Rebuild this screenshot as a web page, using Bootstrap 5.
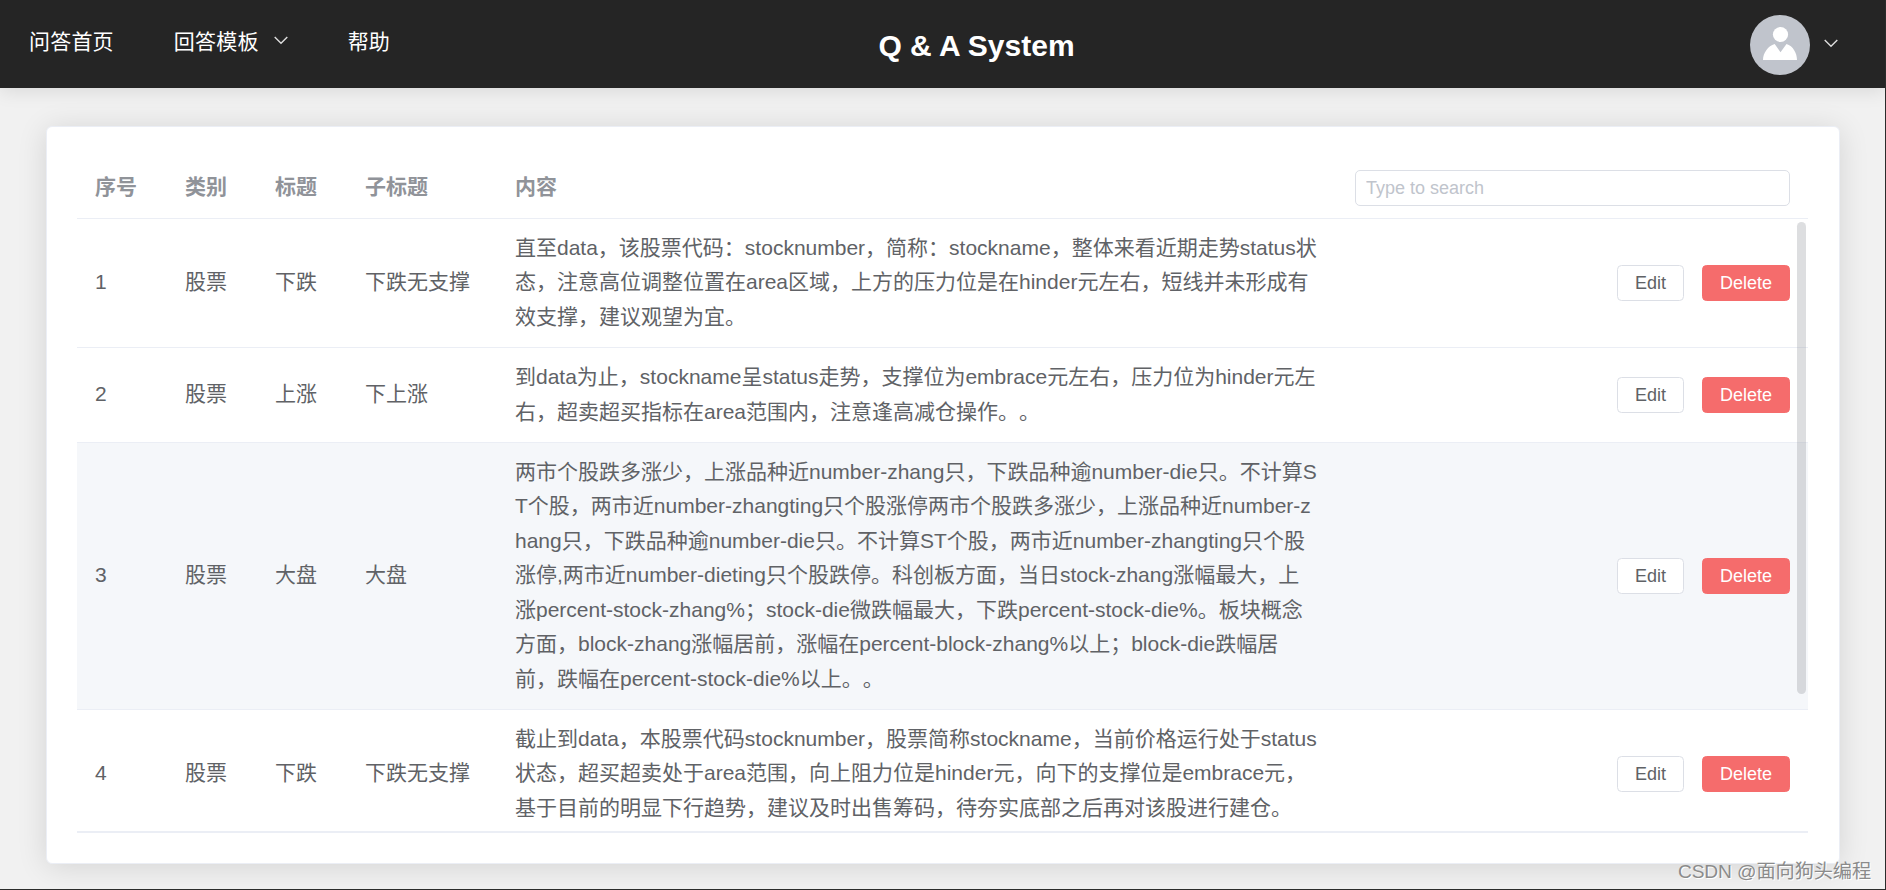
<!DOCTYPE html>
<html lang="zh-CN">
<head>
<meta charset="utf-8">
<meta name="viewport" content="width=device-width, initial-scale=1">
<title>Q &amp; A System</title>
<link href="https://cdn.jsdelivr.net/npm/bootstrap@5.3.0/dist/css/bootstrap.min.css" rel="stylesheet">
<style>
body{height:890px;overflow:hidden;background:#f1f1f1;font-family:"Liberation Sans","Noto Sans CJK SC",sans-serif;font-size:21px;color:#606266;border-right:1px solid #2b2c2b;border-bottom:1px solid #2b2c2b}
.topbar{height:88px;grid-template-columns:1fr auto 1fr;background:#252525;box-shadow:0 3px 18px rgba(0,0,0,.1);color:#fff;padding:0 47px 0 29px}
.topmenu{gap:60px;height:82px;padding-bottom:5px;letter-spacing:.2px}
.brand-title{font-size:30px;font-weight:700;line-height:36px;padding-top:3px;margin-left:86px}
.topbar .caret{margin-left:15px;margin-bottom:2px}
.avatar{margin-top:2px;margin-right:-1px}
.panel{margin:38px 45px 0 46px;height:738px;border:1px solid #ebeef5;border-radius:6px;box-shadow:0 3px 30px rgba(0,0,0,.12);background:#fff;padding:30px}
.grid-wrap{height:706px;position:relative}
.qa-table{table-layout:fixed;width:1731px;border-collapse:separate;border-spacing:0;margin:0}
.qa-table th,.qa-table td{padding:0 18px;border-bottom:1px solid #ebeef5;line-height:34.5px;vertical-align:middle;white-space:nowrap}
.qa-table th{color:#909399;font-weight:700;height:62px}
.qa-table td:not(:last-child){padding-bottom:1px}
.rows{height:612px;overflow:hidden}
.rows tr.active-row td{background:#f5f7fa}
.search{height:36px;font-size:18px;border:1.5px solid #dcdfe6;border-radius:5px;padding:1px 10px 0;color:#606266}
.search::placeholder{color:#c0c4cc}
.act{font-size:18px;line-height:18px;height:36px;border-radius:4.5px;padding:0 17px}
.act-edit{border:1px solid #dcdfe6;color:#606266;background:#fff}
.act-del{border:1px solid #f56c6c;color:#fff;background:#f56c6c}
.acts{gap:18px}
.foot-line{height:2px;background:#ebeef5;width:1731px}
.thumb{position:absolute;right:3px;top:65px;width:9px;height:472px;border-radius:5px;background:rgba(144,147,153,.3)}
.watermark{position:absolute;right:14px;bottom:3px;font-size:19.2px;letter-spacing:-.1px;line-height:28px;color:#8b8b8b;text-shadow:1px 1px 0 #fff;white-space:nowrap}
</style>
</head>
<body class="position-relative">
<nav class="topbar d-grid align-items-center">
  <div class="topmenu d-flex align-items-center">
    <span>问答首页</span>
    <span class="d-flex align-items-center">回答模板
      <svg class="caret" width="14" height="9" viewBox="0 0 14 9" fill="none" stroke="#ddd" stroke-width="1.4"><path d="M.7 1 7 7.3 13.3 1"/></svg>
    </span>
    <span>帮助</span>
  </div>
  <div class="brand-title">Q &amp; A System</div>
  <div class="d-flex align-items-center justify-content-end">
    <svg class="avatar" width="60" height="60" viewBox="0 0 60 60"><circle cx="30" cy="30" r="30" fill="#c0c4cc"/><circle cx="30.5" cy="19.5" r="7.6" fill="#fff"/><path d="M13 45C13 38 18 31 24.7 29L30.5 37.3 36.5 29C43 31 47 38 47 45Z" fill="#fff"/></svg>
    <svg class="caret" width="14" height="9" viewBox="0 0 14 9" fill="none" stroke="#ddd" stroke-width="1.4"><path d="M.7 1 7 7.3 13.3 1"/></svg>
  </div>
</nav>

<main class="panel">
  <div class="grid-wrap">
    <table class="qa-table">
      <colgroup><col style="width:90px"><col style="width:90px"><col style="width:90px"><col style="width:150px"><col style="width:840px"><col style="width:471px"></colgroup>
      <thead><tr><th>序号</th><th>类别</th><th>标题</th><th>子标题</th><th>内容</th><th><input class="search form-control shadow-none" placeholder="Type to search"></th></tr></thead>
    </table>
    <div class="rows">
      <table class="qa-table">
        <colgroup><col style="width:90px"><col style="width:90px"><col style="width:90px"><col style="width:150px"><col style="width:840px"><col style="width:471px"></colgroup>
        <tbody>
          <tr style="height:129px"><td>1</td><td>股票</td><td>下跌</td><td>下跌无支撑</td>
            <td>直至data，该股票代码：stocknumber，简称：stockname，整体来看近期走势status状<br>态，注意高位调整位置在area区域，上方的压力位是在hinder元左右，短线并未形成有<br>效支撑，建议观望为宜。</td>
            <td><div class="acts d-flex justify-content-end"><button class="btn act act-edit">Edit</button><button class="btn act act-del">Delete</button></div></td></tr>
          <tr style="height:95px"><td>2</td><td>股票</td><td>上涨</td><td>下上涨</td>
            <td>到data为止，stockname呈status走势，支撑位为embrace元左右，压力位为hinder元左<br>右，超卖超买指标在area范围内，注意逢高减仓操作。<span class="d-inline-block">。</span></td>
            <td><div class="acts d-flex justify-content-end"><button class="btn act act-edit">Edit</button><button class="btn act act-del">Delete</button></div></td></tr>
          <tr class="active-row" style="height:267px"><td>3</td><td>股票</td><td>大盘</td><td>大盘</td>
            <td>两市个股跌多涨少，上涨品种近number-zhang只，下跌品种逾number-die只。不计算S<br>T个股，两市近number-zhangting只个股涨停两市个股跌多涨少，上涨品种近number-z<br>hang只，下跌品种逾number-die只。不计算ST个股，两市近number-zhangting只个股<br>涨停,两市近number-dieting只个股跌停。科创板方面，当日stock-zhang涨幅最大，上<br>涨percent-stock-zhang%；stock-die微跌幅最大，下跌percent-stock-die%。板块概念<br>方面，block-zhang涨幅居前，涨幅在percent-block-zhang%以上；block-die跌幅居<br>前，跌幅在percent-stock-die%以上。<span class="d-inline-block">。</span></td>
            <td><div class="acts d-flex justify-content-end"><button class="btn act act-edit">Edit</button><button class="btn act act-del">Delete</button></div></td></tr>
          <tr style="height:129px"><td>4</td><td>股票</td><td>下跌</td><td>下跌无支撑</td>
            <td>截止到data，本股票代码stocknumber，股票简称stockname，当前价格运行处于status<br>状态，超买超卖处于area范围，向上阻力位是hinder元，向下的支撑位是embrace元，<br>基于目前的明显下行趋势，建议及时出售筹码，待夯实底部之后再对该股进行建仓。</td>
            <td><div class="acts d-flex justify-content-end"><button class="btn act act-edit">Edit</button><button class="btn act act-del">Delete</button></div></td></tr>
        </tbody>
      </table>
    </div>
    <div class="foot-line"></div>
    <div class="thumb"></div>
  </div>
</main>
<div class="watermark">CSDN @面向狗头编程</div>
<script src="https://cdn.jsdelivr.net/npm/bootstrap@5.3.0/dist/js/bootstrap.bundle.min.js"></script>
</body>
</html>
